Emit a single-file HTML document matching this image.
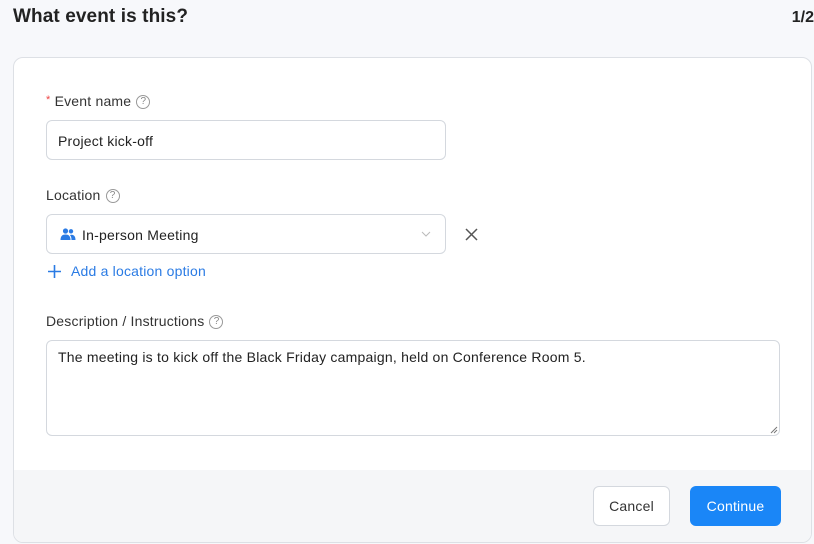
<!DOCTYPE html>
<html><head><style>
*{box-sizing:border-box;margin:0;padding:0}
body{width:814px;height:544px;background:#f7f8fb;font-family:"Liberation Sans",sans-serif;color:#222;position:relative;overflow:hidden}
.a{position:absolute}
h1{position:absolute;left:13px;top:6px;font-size:19px;font-weight:bold;color:#222;letter-spacing:0.1px}
.card{left:13px;top:57px;width:799px;height:486px;background:#fff;border:1px solid #dde0e5;border-radius:10px;overflow:hidden}
.foot{left:0;top:412px;width:100%;height:74px;background:#f5f6f8}
.lbl{font-size:14px;color:#333;letter-spacing:0.2px}
.q{display:inline-block;width:14px;height:14px;border:1px solid #999;border-radius:50%;font-size:10px;color:#888;text-align:center;line-height:12px;vertical-align:-1px;margin-left:5px;letter-spacing:0;position:relative;top:-3px}
.inp{border:1px solid #d4d8de;border-radius:6px;background:#fff;font-size:14px;color:#222;letter-spacing:0.22px}
.btn{border-radius:6px;font-size:14px;text-align:center;line-height:40px;letter-spacing:0.2px}
</style></head><body>
<h1>What event is this?</h1>
<div class="a" style="right:0;top:9px;font-size:16px;font-weight:bold">1/2</div>
<div class="a card">
 <div class="a lbl" style="left:32px;top:35px"><span style="color:#e44;font-size:11px;vertical-align:3px">*</span> Event name<span class="q">?</span></div>
 <div class="a inp" style="left:32px;top:62px;width:400px;height:40px;padding:12px 11px">Project kick-off</div>
 <div class="a lbl" style="left:32px;top:129px">Location<span class="q">?</span></div>
 <div class="a inp" style="left:32px;top:156px;width:400px;height:40px;padding:12px 0 0 35px">In-person Meeting
  <svg class="a" style="left:13px;top:13px" width="16" height="13" viewBox="0 0 16 13" fill="#2a7be4"><circle cx="5.5" cy="3" r="2.6"/><circle cx="11" cy="3.3" r="2.2"/><path d="M0.5 12c0-4 2-5.5 5-5.5s5 1.5 5 5.5z"/><path d="M11.5 12c0-2.5-.6-4-1.6-5 .4-.2.8-.3 1.3-.3 2.5 0 4.3 1.2 4.3 5.3z"/></svg>
  <svg class="a" style="left:374px;top:16px" width="10" height="6" viewBox="0 0 10 6"><path d="M1 1l4 4 4-4" stroke="#bbb" fill="none"/></svg>
 </div>
 <svg class="a" style="left:451px;top:170px" width="13" height="13" viewBox="0 0 13 13"><path d="M1 1l11 11M12 1L1 12" stroke="#555" stroke-width="1.5"/></svg>
 <svg class="a" style="left:34px;top:207px" width="13" height="13" viewBox="0 0 13 13"><path d="M6.5 0v13M0 6.5h13" stroke="#2a7be4" stroke-width="1.6"/></svg>
 <div class="a" style="left:57px;top:205px;font-size:14px;color:#2a7be4;letter-spacing:0.2px">Add a location option</div>
 <div class="a lbl" style="left:32px;top:255px">Description / Instructions<span class="q">?</span></div>
 <div class="a inp" style="left:32px;top:282px;width:734px;height:96px;padding:8px 11px">The meeting is to kick off the Black Friday campaign, held on Conference Room 5.
  <svg class="a" style="right:1px;bottom:1px" width="8" height="8" viewBox="0 0 8 8"><path d="M7 1L1 7M7 4L4 7" stroke="#777" stroke-width="1"/></svg>
 </div>
 <div class="a foot">
  <div class="a btn" style="left:579px;top:16px;width:77px;height:40px;border:1px solid #d4d8de;background:#fff;line-height:38px;color:#333">Cancel</div>
  <div class="a btn" style="left:676px;top:16px;width:91px;height:40px;background:#1a86f7;color:#fff">Continue</div>
 </div>
</div>
</body></html>
